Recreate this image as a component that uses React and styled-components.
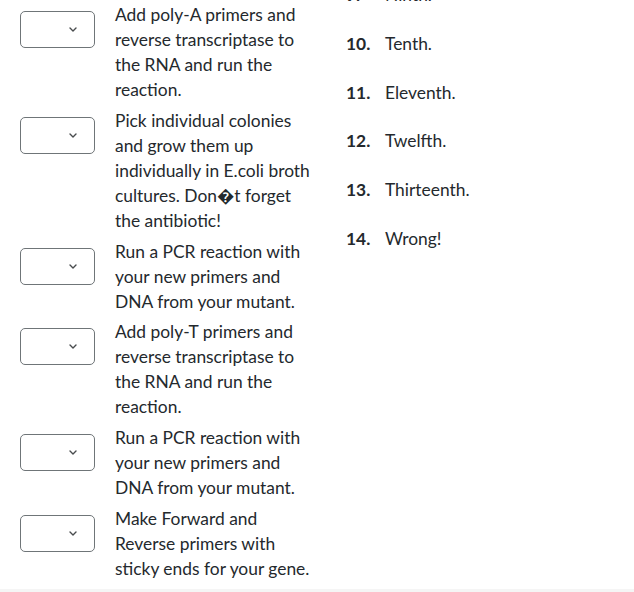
import React from 'react'
import styled, { createGlobalStyle } from 'styled-components'

const Global = createGlobalStyle`
  html, body {
    margin: 0;
    padding: 0;
    background: #fff;
  }
  body {
    font-family: Lato, "Noto Sans", sans-serif;
    color: #24292d;
    overflow: hidden;
  }
`

const Page = styled.div`
  display: grid;
  grid-template-columns: 346px 1fr;
  width: 634px;
  height: 592px;
  overflow: hidden;
  position: relative;
`

const Steps = styled.div`
  display: flex;
  flex-direction: column;
  gap: 5.8px;
  padding: 2px 0 0 20px;
`

const Step = styled.div`
  display: flex;
  align-items: flex-start;
  gap: 20px;
`

const Select = styled.div`
  flex: none;
  box-sizing: border-box;
  width: 75px;
  height: 37px;
  margin-top: 9px;
  border: 1px solid #6f7578;
  border-radius: 5px;
  background: #fff;
  display: flex;
  align-items: center;
  justify-content: flex-end;
  padding-right: 17px;
`

const StepText = styled.p`
  margin: 0;
  width: 200px;
  font-size: 17.4px;
  line-height: 25px;
`

const Answers = styled.ol`
  list-style: none;
  margin: -18px 0 0 0;
  padding: 0;
  display: flex;
  flex-direction: column;
  gap: 23.75px;
`

const Answer = styled.li`
  display: flex;
  font-size: 17.4px;
  line-height: 25px;
`

const Num = styled.span`
  width: 39px;
  font-weight: 700;
`

const Footer = styled.div`
  position: absolute;
  left: 0;
  right: 0;
  bottom: 0;
  height: 3px;
  background: #f5f5f5;
`

const Chevron = () => (
  <svg width="8" height="5" viewBox="0 0 8 5">
    <path d="M1 1 L4 4 L7 1" fill="none" stroke="#494c4e" strokeWidth="1.4" strokeLinecap="round" strokeLinejoin="round" />
  </svg>
)

const steps = [
  'Add poly-A primers and reverse transcriptase to the RNA and run the reaction.',
  'Pick individual colonies and grow them up individually in E.coli broth cultures. Don\uFFFDt forget the antibiotic!',
  'Run a PCR reaction with your new primers and DNA from your mutant.',
  'Add poly-T primers and reverse transcriptase to the RNA and run the reaction.',
  'Run a PCR reaction with your new primers and DNA from your mutant.',
  'Make Forward and Reverse primers with sticky ends for your gene.',
]

const answers = [
  ['9.', 'Ninth.'],
  ['10.', 'Tenth.'],
  ['11.', 'Eleventh.'],
  ['12.', 'Twelfth.'],
  ['13.', 'Thirteenth.'],
  ['14.', 'Wrong!'],
]

const App = () => {
  return (
    <>
      <Global />
      <Page>
        <Steps>
          {steps.map((s, i) => (
            <Step key={i}>
              <Select>
                <Chevron />
              </Select>
              <StepText>{s}</StepText>
            </Step>
          ))}
        </Steps>
        <div>
          <Answers>
            {answers.map(([n, t]) => (
              <Answer key={n}>
                <Num>{n}</Num>
                <span>{t}</span>
              </Answer>
            ))}
          </Answers>
        </div>
        <Footer />
      </Page>
    </>
  )
}

export default App
